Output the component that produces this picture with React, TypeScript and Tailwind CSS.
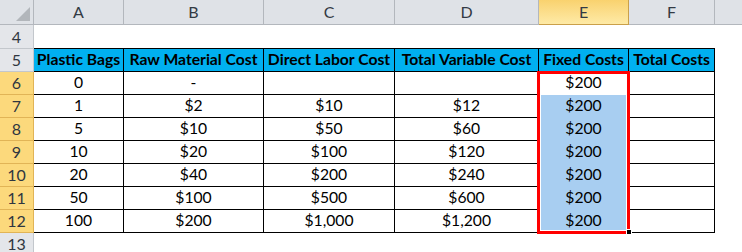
import React from 'react';

const cols = [
  { key: 'A', w: 'w-[90px]' },
  { key: 'B', w: 'w-[140px]' },
  { key: 'C', w: 'w-[131px]' },
  { key: 'D', w: 'w-[144px]' },
  { key: 'E', w: 'w-[90px]' },
  { key: 'F', w: 'w-[86px]' },
];

const headings = ['Plastic Bags', 'Raw Material Cost', 'Direct Labor Cost', 'Total Variable Cost', 'Fixed Costs', 'Total Costs'];

const data: string[][] = [
  ['0', '-', '', '', '$200', ''],
  ['1', '$2', '$10', '$12', '$200', ''],
  ['5', '$10', '$50', '$60', '$200', ''],
  ['10', '$20', '$100', '$120', '$200', ''],
  ['20', '$40', '$200', '$240', '$200', ''],
  ['50', '$100', '$500', '$600', '$200', ''],
  ['100', '$200', '$1,000', '$1,200', '$200', ''],
];

const RowHead: React.FC<{ n: number; selected?: boolean; h: string }> = ({ n, selected, h }) => (
  <div
    className={`${h} w-[34px] shrink-0 flex items-center justify-center border-r border-b text-[16px] text-[#2f3640] ${
      selected ? 'bg-[#fcd97c] border-[#e1b456]' : 'bg-[#e4e6ea] border-[#c3c7cc]'
    }`}
  >
    {n}
  </div>
);

export default function App() {
  return (
    <div className="relative w-[742px] h-[252px] bg-white overflow-hidden font-['Lato','Liberation_Sans',sans-serif] text-black">
      {/* column headers */}
      <div className="flex h-[25px]">
        <div className="relative w-[34px] shrink-0 bg-[#dfe2e7] border-r border-b border-[#b3b7bd]">
          <div
            className="absolute right-[3px] bottom-[3px] w-[14px] h-[14px] bg-[#b2b6bb]"
            style={{ clipPath: 'polygon(100% 0, 100% 100%, 0 100%)' }}
          />
        </div>
        {cols.map((c) => (
          <div
            key={c.key}
            className={`${c.w} shrink-0 flex items-center justify-center border-r border-b text-[16px] text-[#333a44] ${
              c.key === 'E'
                ? 'bg-gradient-to-b from-[#f9d26e] to-[#feeaa6] border-[#caa04a]'
                : 'bg-[#dfe2e7] border-[#b3b7bd]'
            }`}
          >
            {c.key}
          </div>
        ))}
        <div className="flex-1 bg-[#dfe2e7] border-b border-[#b3b7bd]" />
      </div>

      {/* row 4 */}
      <div className="flex h-[24px]">
        <RowHead n={4} h="h-[24px]" />
        {cols.map((c) => (
          <div key={c.key} className={`${c.w} shrink-0 border-b border-black`} />
        ))}
      </div>

      {/* row 5 headings */}
      <div className="flex h-[23px]">
        <RowHead n={5} h="h-[23px]" />
        {cols.map((c, i) => (
          <div
            key={c.key}
            className={`${c.w} shrink-0 flex items-center justify-center bg-[#00b0f0] border-r border-b border-black text-[15.7px] font-bold whitespace-nowrap`}
          >
            {headings[i]}
          </div>
        ))}
      </div>

      {/* data rows */}
      {data.map((row, r) => (
        <div key={r} className="flex h-[23px]">
          <RowHead n={r + 6} selected h="h-[23px]" />
          {cols.map((c, i) => {
            const isE = c.key === 'E';
            let cls = 'bg-white border-b-black';
            if (isE && r === 0) cls = 'bg-white border-b-white';
            else if (isE && r < 6) cls = 'bg-[#a8cef1] border-b-[#a8cef1]';
            else if (isE) cls = 'bg-[#a8cef1] border-b-black';
            return (
              <div
                key={c.key}
                className={`${c.w} shrink-0 flex items-center justify-center border-r border-b border-r-black ${cls} text-[15.7px]`}
              >
                {row[i]}
              </div>
            );
          })}
        </div>
      ))}

      {/* row 13 */}
      <div className="flex h-[23px]">
        <RowHead n={13} h="h-[23px]" />
      </div>

      {/* selection frame */}
      <div className="absolute left-[537px] top-[71px] w-[93px] h-[163px] border-[3px] border-[#ff0000] shadow-[inset_0_0_0_1px_#ffffff]" />
      <div className="absolute left-[626px] top-[229px] w-[6px] h-[6px] bg-black border border-white" />
    </div>
  );
}
